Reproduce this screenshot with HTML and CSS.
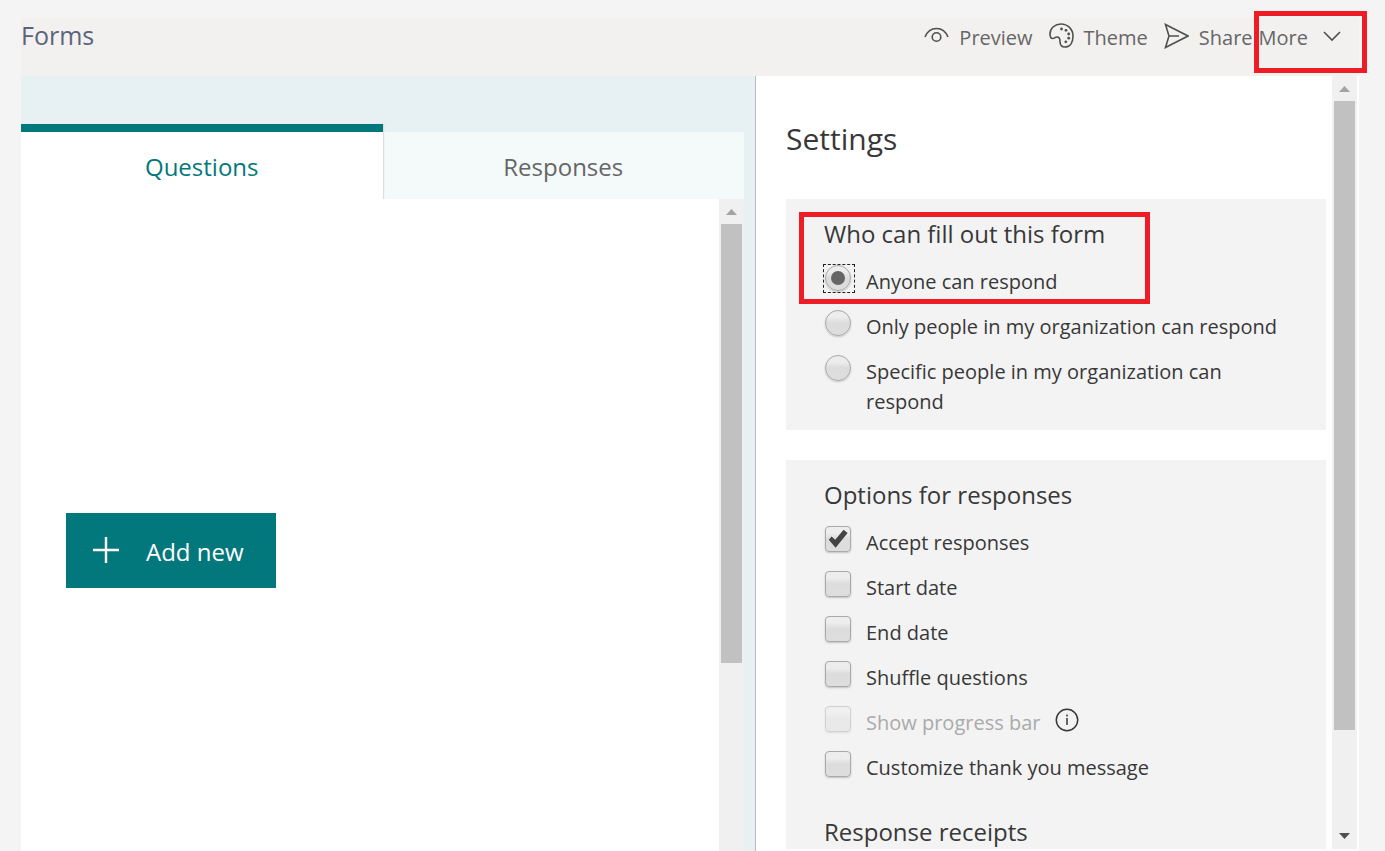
FILE: index.html
```html
<!DOCTYPE html>
<html lang="en">
<head>
    <meta charset="UTF-8">
    <meta name="viewport" content="width=device-width, initial-scale=1.0">
    <title>Forms</title>
    <link rel="stylesheet" href="styles.css">
</head>
<body>
    <div class="app">
        <header class="header">
            <a class="brand" href="#">Forms</a>
            <div class="actions">
                <button class="preview">
                    <svg width="25" height="26" viewBox="0 0 25 26"><path d="M1 14C3 9 7 5.500 12.500 5.500S22 9 24 14"/><circle cx="12.500" cy="14" r="4.300"/></svg>
                    Preview
                </button>
                <button class="theme">
                    <svg width="25" height="26" viewBox="0 0 25 26"><path d="M12 1C18.500 1 24 6 24 13c0 6.500-3 11-8 11-4 0-5-2.500-5-5.500 0-3-1-4.500-3-4.500-2.200 0-2.500 1.500-4.200 1.500C1.800 15.500 1 13.500 1 11 1 5 6 1 12 1z"/><g class="dots"><circle cx="12.500" cy="6" r="1.400"/><circle cx="17" cy="7.300" r="1.400"/><circle cx="19.700" cy="11" r="1.400"/><circle cx="19.700" cy="15.200" r="1.400"/><circle cx="16.800" cy="18.800" r="1.400"/></g></svg>
                    Theme
                </button>
                <button class="share">
                    <svg width="25" height="26" viewBox="0 0 25 26"><path d="M1.500 1.500L24 13 1.500 24.500 5 13zM5 13h10"/></svg>
                    Share
                </button>
                <button class="more">
                    More
                    <svg width="18" height="26" viewBox="0 0 18 26"><path d="M1 9l8 8 8-8"/></svg>
                    <span class="mark"></span>
                </button>
            </div>
        </header>

        <main class="main">
            <section class="editor">
                <div class="tabs">
                    <button class="tab active">Questions</button>
                    <button class="tab">Responses</button>
                </div>
                <div class="editor-body">
                    <div class="canvas">
                        <button class="add">
                            <svg width="28" height="28" viewBox="0 0 28 28"><path d="M14 1v26M1 14h26"/></svg>
                            Add new
                        </button>
                    </div>
                    <div class="scrollbar" aria-hidden="true">
                        <svg class="arrow" width="25" height="25" viewBox="0 0 25 25"><path d="M7 16l5.500-6 5.500 6z"/></svg>
                        <div class="track"><div class="thumb thumb-editor"></div></div>
                    </div>
                </div>
            </section>

            <aside class="settings">
                <div class="settings-body">
                    <h1>Settings</h1>

                    <div class="card">
                        <div class="marked">
                            <h2>Who can fill out this form</h2>
                            <div class="option">
                                <input type="radio" name="who" id="anyone" class="focused" checked>
                                <label for="anyone">Anyone can respond</label>
                            </div>
                            <span class="mark"></span>
                        </div>
                        <div class="option">
                            <input type="radio" name="who" id="org">
                            <label for="org">Only people in my organization can respond</label>
                        </div>
                        <div class="option">
                            <input type="radio" name="who" id="specific">
                            <label for="specific">Specific people in my organization can respond</label>
                        </div>
                    </div>

                    <div class="card">
                        <h2>Options for responses</h2>
                        <div class="option">
                            <input type="checkbox" id="accept" checked>
                            <label for="accept">Accept responses</label>
                        </div>
                        <div class="option">
                            <input type="checkbox" id="start">
                            <label for="start">Start date</label>
                        </div>
                        <div class="option">
                            <input type="checkbox" id="end">
                            <label for="end">End date</label>
                        </div>
                        <div class="option">
                            <input type="checkbox" id="shuffle">
                            <label for="shuffle">Shuffle questions</label>
                        </div>
                        <div class="option">
                            <input type="checkbox" id="progress" disabled>
                            <label for="progress">Show progress bar</label>
                            <svg class="info" width="24" height="24" viewBox="0 0 24 24"><circle cx="12" cy="12" r="10.700"/><path d="M12 10v7M12 6.500v2"/></svg>
                        </div>
                        <div class="option">
                            <input type="checkbox" id="thanks">
                            <label for="thanks">Customize thank you message</label>
                        </div>
                        <h2 class="next">Response receipts</h2>
                    </div>
                </div>
                <div class="scrollbar" aria-hidden="true">
                    <svg class="arrow" width="25" height="25" viewBox="0 0 25 25"><path d="M7 16l5.500-6 5.500 6z"/></svg>
                    <div class="track"><div class="thumb thumb-settings"></div></div>
                    <svg class="arrow down" width="25" height="25" viewBox="0 0 25 25"><path d="M7 9l5.500 6L18 9z"/></svg>
                </div>
            </aside>
        </main>
    </div>
</body>
</html>
```
FILE: styles.css
```css
*{
    box-sizing: border-box;
}

body{
    margin: 0;
    background: #f4f4f4;
    color: #383838;
    font-family: "Open Sans", "Noto Sans", sans-serif;
    font-size: 20px;
    line-height: 30px;
}
button{
    appearance: none;
    border: none;
    background: none;
    padding: 0;
    font: inherit;
    color: inherit;
    cursor: pointer;
}
svg{
    flex: none;
    fill: none;
    stroke: currentColor;
    stroke-width: 1.6;
}
h1,h2{
    margin: 0;
    font-weight: 400;
}

.app{
    height: 100vh;
    padding: 18px 26px 0 21px;
    display: flex;
    flex-direction: column;
    overflow: hidden;
}

/* header */
.header{
    height: 58px;
    flex: none;
    background: #f3f1f0;
    padding: 1px 18px 0 0;
    display: flex;
    align-items: flex-start;
    justify-content: space-between;
}
.brand{
    color: #59647a;
    font-size: 25px;
    line-height: 32px;
    text-decoration: none;
}
.actions{
    display: flex;
    padding-top: 4px;
    gap: 16px;
    color: #666;
}
.actions button{
    display: flex;
    align-items: center;
    gap: 10px;
}
.actions svg{
    margin-bottom: 4px;
    color: #505050;
}
.actions .dots{
    fill: currentColor;
    stroke: none;
}
.actions .more{
    position: relative;
    gap: 15px;
    margin-left: -10px;
}

/* red highlight frames */
.mark{
    position: absolute;
    border: 5px solid #ee1c25;
    pointer-events: none;
}
.more .mark{
    inset: -12px -26px -20px -5px;
}
.marked{
    position: relative;
}
.marked .mark{
    inset: -5px 138px -7px -25px;
}

.main{
    flex: 1;
    min-height: 0;
    display: grid;
    grid-template-columns: 734fr 604fr;
    grid-template-rows: 100%;
}

/* left side */
.editor{
    min-width: 0;
    background: #e7f0f3;
    padding: 48px 11px 0 0;
    display: flex;
    flex-direction: column;
}
.tabs{
    display: flex;
    align-items: flex-end;
}
.tab{
    flex: 1;
    height: 67px;
    background: #f3faf9;
    color: #666;
    font-size: 24px;
    padding-top: 3px;
}
.tab.active{
    position: relative;
    height: 75px;
    background: #fff;
    color: #03787c;
    border-top: 8px solid #03787c;
    box-shadow: 1px 0 1px #ddd;
}
.editor-body{
    flex: 1;
    min-height: 0;
    display: flex;
    position: relative;
    background: #fff;
}
.canvas{
    flex: 1;
    padding: 314px 45px 0;
}
.add{
    display: flex;
    align-items: center;
    gap: 26px;
    height: 75px;
    padding: 2px 32px 0 26px;
    background: #03787c;
    color: #fff;
    font-size: 24px;
}
.add svg{
    stroke-width: 2.4;
    margin-bottom: 4px;
}

/* scrollbars */
.scrollbar{
    width: 25px;
    flex: none;
    display: flex;
    flex-direction: column;
    background: #f0f0f0;
}
.arrow{
    fill: #a3a3a3;
    stroke: none;
}
.arrow.down{
    fill: #505050;
}
.track{
    flex: 1;
    padding: 0 2px;
}
.thumb{
    background: #c1c1c1;
}
.thumb-editor{
    height: 70%;
}
.thumb-settings{
    height: 87%;
}

/* right side */
.settings{
    min-width: 0;
    background: #fff;
    border-left: 1px solid #b4bcbc;
    padding: 0 2px 2px 30px;
    display: flex;
    gap: 6px;
}
.settings-body{
    flex: 1;
    min-width: 0;
    overflow: hidden;
}
h1{
    padding: 43px 0 40px;
    font-size: 30px;
    line-height: 40px;
}
h2{
    font-size: 24px;
    line-height: 34px;
    margin-bottom: 14px;
}
.card{
    background: #f3f3f3;
    padding: 18px 38px 13px;
    margin-bottom: 30px;
}
.option{
    display: flex;
    align-items: flex-start;
    gap: 15px;
    margin-bottom: 13px;
}
.option:last-child{
    margin-bottom: 0;
}
.option label{
    padding-top: 2px;
}
.option input{
    appearance: none;
    position: relative;
    flex: none;
    display: grid;
    place-items: center;
    width: 26px;
    height: 26px;
    margin: 0 0 0 1px;
    border: 1px solid #a9a9a9;
    border-radius: 4px;
    background: linear-gradient(#ededed, #ededed 25%, #dcdcdc 50%, #dedede);
    box-shadow: 0 1px 2px rgba(0,0,0,0.2);
    outline: none;
}
.option input[type=radio]{
    border-radius: 50%;
}
.option input[type=radio]:checked::before{
    content: "";
    width: 14px;
    height: 14px;
    border-radius: 50%;
    background: #666;
}
.option input[type=checkbox]:checked::before{
    content: "";
    width: 20px;
    height: 20px;
    background: #444;
    clip-path: polygon(4% 54%, 18% 38%, 36% 54%, 78% 4%, 98% 20%, 38% 94%);
}
/* square focus ring round the radio */
.option .focused::after{
    content: "";
    position: absolute;
    inset: -2px -5px -3px -3px;
    border: 1px dashed #222;
}
.option input:disabled{
    opacity: 0.45;
}
.option input:disabled + label{
    color: #aaa;
}
.info{
    stroke-width: 1.5;
    margin-top: 2px;
}
.next{
    margin-top: 32px;
}
```
